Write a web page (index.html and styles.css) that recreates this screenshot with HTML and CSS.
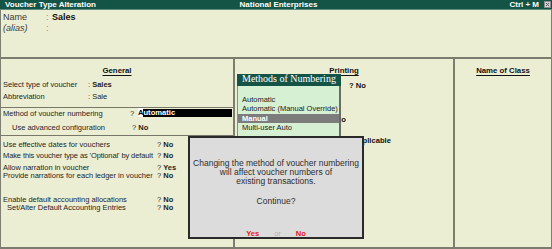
FILE: index.html
```html
<!DOCTYPE html>
<html>
<head>
<meta charset="utf-8">
<title>Voucher Type Alteration</title>
<link rel="stylesheet" href="styles.css">
</head>
<body>
<div class="titlebar">
  <span class="t-left">Voucher Type Alteration</span>
  <span class="t-center">National Enterprises</span>
  <span class="t-right">Ctrl + M<span class="close"><svg width="7" height="7" viewBox="0 0 7 7"><rect x="0.5" y="0.5" width="6" height="6" fill="#d4d4d4" stroke="#8a8a8a"/><path d="M2 2 L5 5 M5 2 L2 5" stroke="#555" stroke-width="1"/></svg></span></span>
</div>
<div class="frame">
  <div class="header">
    <div class="hrow"><span class="hlabel">Name</span><span class="hcolon">:</span><b class="hval">Sales</b></div>
    <div class="hrow"><span class="hlabel"><i>(alias)</i></span><span class="hcolon">:</span><span></span></div>
  </div>
  <div class="columns">
    <div class="col col-general">
      <div class="heading">General</div>
      <div class="urow urow-first"><span>Select type of voucher</span><span>: <b>Sales</b></span></div>
      <div class="urow"><span>Abbreviation</span><span>: Sale</span></div>
      <div class="sep sep-a"></div>
      <div class="mrow"><span>Method of voucher numbering</span><span class="mans"><span class="q">?</span><span class="input"><span class="cursor">A</span>utomatic</span></span></div>
      <div class="arow"><span>Use advanced configuration</span><span>? <b>No</b></span></div>
      <div class="sep sep-b"></div>
      <div class="lrow lr1"><span>Use effective dates for vouchers</span><span>? <b>No</b></span></div>
      <div class="lrow lr2"><span class="tight">Make this voucher type as 'Optional' by default</span><span>? <b>No</b></span></div>
      <div class="lrow lr3"><span>Allow narration in voucher</span><span>? <b>Yes</b></span></div>
      <div class="lrow lr4"><span>Provide narrations for each ledger in voucher</span><span>? <b>No</b></span></div>
      <div class="lrow lr5"><span>Enable default accounting allocations</span><span>? <b>No</b></span></div>
      <div class="lrow lr6 indent"><span>Set/Alter Default Accounting Entries</span><span>? <b>No</b></span></div>
    </div>
    <div class="col col-printing">
      <div class="heading">Printing</div>
      <div class="prow p1">? No</div>
      <div class="prow p2">? No</div>
      <div class="prow p3">Not Applicable</div>
    </div>
    <div class="col col-class">
      <div class="heading">Name of Class</div>
    </div>
  </div>
</div>

<div class="methods">
  <div class="m-title">Methods of Numbering</div>
  <div class="m-body">
    <div class="m-item">Automatic</div>
    <div class="m-item">Automatic (Manual Override)</div>
    <div class="m-item m-sel">Manual</div>
    <div class="m-item">Multi-user Auto</div>
  </div>
</div>

<div class="dialog">
  <div class="d-msg">Changing the method of voucher numbering<br>will affect voucher numbers of<br>existing transactions.</div>
  <div class="d-ask">Continue?</div>
  <div class="d-btns"><span class="d-yes">Yes</span><span class="d-or">or</span><span class="d-no">No</span></div>
</div>
</body>
</html>
```

FILE: styles.css
```css
* { box-sizing: border-box; margin: 0; padding: 0; }
html, body { width: 552px; height: 249px; overflow: hidden; }
body {
  background: #eceed4;
  font-family: "Liberation Sans", Arial, sans-serif;
  color: #1e1e1e;
  position: relative;
}

/* title bar */
.titlebar {
  height: 10px;
  background: #145446;
  border-bottom: 1px solid #5f8a7c;
  color: #ffffff;
  font-size: 8px;
  font-weight: bold;
  line-height: 9px;
  display: grid;
  grid-template-columns: 1fr auto 1fr;
  padding-left: 5px;
}
.t-center { text-align: center; }
.t-right { justify-self: end; display: flex; align-items: flex-start; }
.close { display: block; width: 7px; height: 7px; margin: 1px 1px 0 5px; }
.close svg { display: block; }

/* framed area */
.frame {
  height: 239px;
  border-left: 1px solid #808072;
  border-right: 1px solid #808072;
  border-bottom: 2px solid #7c7c6e;
  display: flex;
  flex-direction: column;
}
.header {
  height: 49px;
  padding: 2px 0 0 2px;
  border-bottom: 2px solid #7c7c6e;
  font-size: 9px;
  line-height: 11px;
}
.hrow { display: grid; grid-template-columns: 43px 6px auto; }
.hlabel { color: #3a3a3a; }
.hcolon { color: #8a8a8a; }
.hval { color: #111; }

.columns {
  flex: 1;
  display: grid;
  grid-template-columns: 234px 220px 1fr;
}
.col { border-right: 2px solid #7e7e70; }
.col-class { border-right: none; }

.heading {
  padding-top: 6.6px;
  line-height: 10px;
  font-size: 7.8px;
  font-weight: bold;
  text-align: center;
  text-decoration: underline;
  text-underline-offset: 1.5px;
  color: #111;
}

.col-general { font-size: 7.5px; white-space: nowrap; }
.urow { display: grid; grid-template-columns: 85px 1fr; padding-left: 2px; line-height: 12px; }
.urow-first { margin-top: 3.1px; }
.sep { border-top: 1px solid #77776a; }
.sep-a { margin-top: 4.3px; }
.sep-b { margin-top: 0.7px; }

.mrow { display: grid; grid-template-columns: 127px 1fr; padding-left: 2px; line-height: 12px; }
.mans { display: flex; align-items: flex-start; }
.q { width: 8px; }
.input {
  flex: 1;
  margin: 1px 1px 0 0;
  height: 8px;
  line-height: 8px;
  background: #000;
  color: #fff;
  font-weight: bold;
  font-size: 7.6px;
}
.cursor { background: #fff; color: #000; }

.arow { display: grid; grid-template-columns: 120px 1fr; padding-left: 11px; line-height: 12px; margin-top: 2.3px; }

.lrow { display: grid; grid-template-columns: 154px 1fr; padding-left: 2px; line-height: 8px; }
.lrow > span { min-width: 0; }
.lrow.indent { padding-left: 6px; grid-template-columns: 150px 1fr; }
.tight { letter-spacing: -0.1px; }
.lr1 { margin-top: 4.7px; }
.lr2 { margin-top: 3px; }
.lr3 { margin-top: 4px; }
.lr5 { margin-top: 16.4px; }

/* printing column */
.col-printing { font-size: 7.6px; font-weight: bold; color: #111; }
.prow { line-height: 12px; white-space: nowrap; }
.p1 { margin-top: 4.1px; padding-left: 114px; }
.p2 { margin-top: 22.4px; padding-left: 94px; }
.p3 { margin-top: 9.3px; padding-left: 103px; }

/* methods popup */
.methods {
  position: absolute;
  left: 237px;
  top: 74px;
  width: 104px;
  height: 62px;
  background: #d6f0d4;
  border-left: 1px solid #8c8c84;
  border-right: 2px solid #6c6c64;
}
.m-title {
  height: 12px;
  background: #145446;
  color: #ffffff;
  font-family: "Liberation Serif", "Times New Roman", serif;
  font-size: 10px;
  line-height: 9px;
  padding: 0 0 3px 5px;
  margin: 0 -2px 0 -1px;
  white-space: nowrap;
}
.m-body { padding-top: 9px; font-size: 7.5px; color: #1a1a1a; }
.m-item { line-height: 9px; padding-left: 4px; white-space: nowrap; }
.m-sel { margin-top: 1px; background: #7c7c7c; color: #fff; font-weight: bold; }

/* dialog */
.dialog {
  position: absolute;
  left: 188px;
  top: 136px;
  width: 176px;
  height: 103px;
  background: #dcdcdc;
  border: 2px solid #2a2a2a;
  text-align: center;
  color: #2e2e2e;
  font-size: 8.5px;
  line-height: 9.35px;
  padding-top: 20.7px;
}
.d-ask { margin-top: 10px; }
.d-btns {
  margin-top: 22.6px;
  display: flex;
  justify-content: center;
  gap: 15px;
  font-size: 7.5px;
}
.d-yes, .d-no { color: #e41a1a; font-weight: bold; }
.d-or { color: #b4b4b4; }
```
